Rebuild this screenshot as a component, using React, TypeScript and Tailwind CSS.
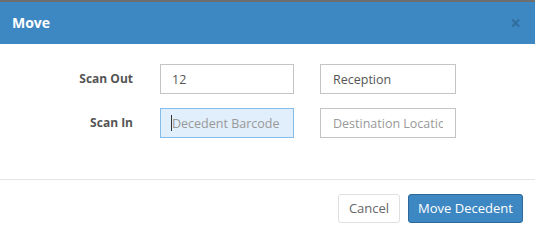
import React from 'react';

const font = { fontFamily: '"Open Sans", "Liberation Sans", sans-serif' };

// Move dialog: scan out / scan in rows and footer actions
const App = () => {
    return (
        <div className="w-[535px] h-[236px] overflow-hidden bg-white" style={font}>
            {/* page behind the modal */}
            <div className="h-[2px] bg-[#6e6e6e]" />

            {/* Header */}
            <div className="h-[42px] bg-[#3d87c2] flex items-center justify-between pl-[12px] pr-[14px]">
                <h4 className="text-[14px] font-bold text-white leading-none">Move</h4>
                <span className="text-[19px] font-bold leading-none text-black/20">×</span>
            </div>

            {/* Body */}
            <div className="h-[135px] pt-[20px] flex flex-col gap-[14px]">
                <div className="flex items-center">
                    <label className="w-[133px] text-right text-[12px] font-bold text-[#555]">Scan Out</label>
                    <input
                        className="ml-[27px] w-[134px] h-[30px] px-[11px] border border-[#c4c4c4] text-[12.5px] text-[#555] outline-none"
                        defaultValue="12"
                    />
                    <input
                        className="ml-[26px] w-[136px] h-[30px] px-[12px] border border-[#c4c4c4] text-[12.5px] text-[#555] outline-none"
                        defaultValue="Reception"
                    />
                </div>
                <div className="flex items-center">
                    <label className="w-[133px] text-right text-[12px] font-bold text-[#555]">Scan In</label>
                    <div className="relative ml-[27px]">
                        <input
                            className="w-[134px] h-[30px] px-[11px] border border-[#84bde9] bg-[#e1eefb] text-[12.5px] text-[#555] placeholder:text-[#999] outline-none"
                            placeholder="Decedent Barcode"
                        />
                        <span className="absolute left-[11px] top-[7px] w-px h-[16px] bg-[#333]" />
                    </div>
                    <input
                        className="ml-[26px] w-[136px] h-[30px] px-[12px] border border-[#c4c4c4] text-[12.5px] text-[#555] placeholder:text-[#999] outline-none"
                        placeholder="Destination Location"
                    />
                </div>
            </div>

            {/* Footer */}
            <div className="border-t border-[#e5e5e5] flex justify-end gap-[8px] pt-[14px] pr-[12px]">
                <button className="w-[62px] h-[29px] rounded-[3px] border border-[#e0e0e0] bg-white text-[13px] text-[#666]">
                    Cancel
                </button>
                <button className="w-[115px] h-[29px] rounded-[3px] border border-[#2c6899] bg-[#3d87c2] text-[13px] text-white">
                    Move Decedent
                </button>
            </div>
        </div>
    );
};

export default App;
